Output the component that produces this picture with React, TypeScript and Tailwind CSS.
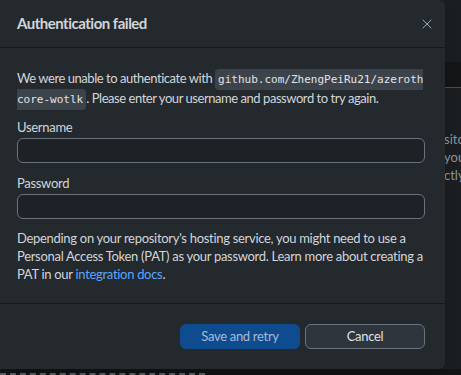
import { X } from 'lucide-react';

const font = { fontFamily: 'Lato, "Noto Sans", sans-serif' };
const mono = { fontFamily: '"DejaVu Sans Mono", monospace' };

function Field({ label, type }: { label: string; type: string }) {
  return (
    <div className="flex flex-col">
      <label className="text-[13px] leading-[18px] tracking-[-0.3px] text-[#d1d5da]">{label}</label>
      <input
        type={type}
        className="mt-[2px] h-[25px] w-full rounded-[6px] border border-[#6a737d] bg-[#1e2227] px-2 text-[13px] text-[#d1d5da] outline-none"
      />
    </div>
  );
}

export default function App() {
  return (
    <div className="relative h-[375px] w-[461px] overflow-hidden bg-[#1b1e21]" style={font}>
      {/* page behind the dialog */}
      <div className="flex h-full flex-col">
        <div className="h-[62px] shrink-0" />
        <div className="h-[26px] shrink-0 border-b border-[#444c56] bg-[#131517]" />
        <div className="mt-[42px] flex flex-col pl-[444px] text-[13px] leading-[18px] text-[#8b949e] whitespace-nowrap">
          <span>sitory</span>
          <span>your</span>
          <span>ctly.</span>
        </div>
        <div className="mt-auto h-[6px] shrink-0 bg-[#131416]">
          <div className="mt-[4px] w-[205px] border-t-2 border-dashed border-[#5a6068]" />
        </div>
      </div>

      {/* dialog */}
      <div className="absolute left-0 top-0 flex h-[369px] w-[445px] flex-col rounded-r-[6px] bg-[#24292e] shadow-lg">
        <div className="flex h-[48px] shrink-0 items-center justify-between border-b border-[#16191c] pl-[17px] pr-[8px]">
          <h1 className="text-[15px] font-bold tracking-[-0.5px] text-[#d1d5da]">Authentication failed</h1>
          <button className="flex h-[20px] w-[20px] items-center justify-center text-[#a0a8b0]">
            <X size={16} strokeWidth={1.5} />
          </button>
        </div>

        <div className="flex flex-1 flex-col pl-[17px] pr-[20px] pt-[20px] text-[13px] tracking-[-0.3px] text-[#d1d5da]">
          <p className="-mr-[10px] whitespace-nowrap leading-[20px] tracking-[-0.45px]">
            We were unable to authenticate with{' '}
            <code
              className="rounded-l-[4px] bg-[#3d434b] py-[4px] pl-[3px] text-[11px] leading-none tracking-normal text-[#e1e4e8]"
              style={mono}
            >
              github.com/ZhengPeiRu21/azeroth
            </code>
            <br />
            <code
              className="rounded-r-[4px] bg-[#3d434b] py-[4px] pr-[3px] text-[11px] leading-none tracking-normal text-[#e1e4e8]"
              style={mono}
            >
              core-wotlk
            </code>
            . Please enter your username and password to try again.
          </p>

          <div className="mt-[10px] flex flex-col gap-[11px]">
            <Field label="Username" type="text" />
            <Field label="Password" type="password" />
          </div>

          <p className="mt-[10px] whitespace-nowrap leading-[18px]">
            Depending on your repository's hosting service, you might need to use a<br />
            Personal Access Token (PAT) as your password. Learn more about creating a<br />
            PAT in our <a className="text-[#58a6ff]">integration docs</a>.
          </p>
        </div>

        <div className="flex h-[66px] shrink-0 items-center justify-end gap-[5px] border-t border-[#16191c] pr-[20px] text-[13px] tracking-[-0.3px]">
          <button className="h-[25px] w-[120px] rounded-[6px] bg-[#0f4c8f] text-[#a7bbd3]">
            Save and retry
          </button>
          <button className="h-[25px] w-[120px] rounded-[6px] border border-[#6a737d] bg-[#2f353c] text-[#dfe2e6]">
            Cancel
          </button>
        </div>
      </div>
    </div>
  );
}
